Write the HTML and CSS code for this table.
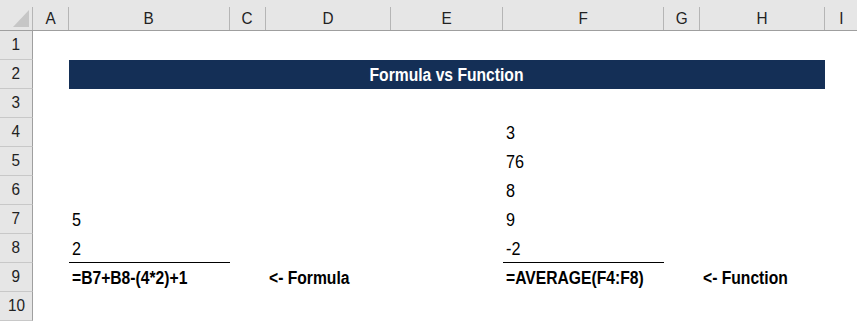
FILE: index.html
```html
<!DOCTYPE html>
<html>
<head>
<meta charset="utf-8">
<title>Formula vs Function</title>
<link rel="stylesheet" href="styles.css">
</head>
<body>
<div class="sheet">
  <div class="colhdr">
    <div class="corner"><svg width="16" height="17" viewBox="0 0 16 17"><polygon points="16,0 16,17 0,17" fill="#c6c6c6"/></svg></div>
    <div class="ch w-a"><span>A</span></div>
    <div class="ch w-b"><span>B</span></div>
    <div class="ch w-c"><span>C</span></div>
    <div class="ch w-d"><span>D</span></div>
    <div class="ch w-e"><span>E</span></div>
    <div class="ch w-f"><span>F</span></div>
    <div class="ch w-g"><span>G</span></div>
    <div class="ch w-h"><span>H</span></div>
    <div class="ch w-i"><span>I</span></div>
  </div>

  <div class="row"><div class="rh"><span>1</span></div></div>

  <div class="row">
    <div class="rh"><span>2</span></div>
    <div class="c w-a"></div>
    <div class="c title"><span class="b">Formula vs Function</span></div>
  </div>

  <div class="row"><div class="rh"><span>3</span></div></div>

  <div class="row">
    <div class="rh"><span>4</span></div>
    <div class="c w-a"></div><div class="c w-b"></div><div class="c w-c"></div><div class="c w-d"></div><div class="c w-e"></div>
    <div class="c w-f"><span class="v">3</span></div>
  </div>

  <div class="row">
    <div class="rh"><span>5</span></div>
    <div class="c w-a"></div><div class="c w-b"></div><div class="c w-c"></div><div class="c w-d"></div><div class="c w-e"></div>
    <div class="c w-f"><span class="v">76</span></div>
  </div>

  <div class="row">
    <div class="rh"><span>6</span></div>
    <div class="c w-a"></div><div class="c w-b"></div><div class="c w-c"></div><div class="c w-d"></div><div class="c w-e"></div>
    <div class="c w-f"><span class="v">8</span></div>
  </div>

  <div class="row">
    <div class="rh"><span>7</span></div>
    <div class="c w-a"></div>
    <div class="c w-b"><span class="v">5</span></div>
    <div class="c w-c"></div><div class="c w-d"></div><div class="c w-e"></div>
    <div class="c w-f"><span class="v">9</span></div>
  </div>

  <div class="row">
    <div class="rh"><span>8</span></div>
    <div class="c w-a"></div>
    <div class="c w-b under"><span class="v">2</span></div>
    <div class="c w-c"></div><div class="c w-d"></div><div class="c w-e"></div>
    <div class="c w-f under"><span class="v">-2</span></div>
  </div>

  <div class="row">
    <div class="rh"><span>9</span></div>
    <div class="c w-a"></div>
    <div class="c w-b"><span class="b">=B7+B8-(4*2)+1</span></div>
    <div class="c w-c"></div>
    <div class="c w-d"><span class="b">&lt;- Formula</span></div>
    <div class="c w-e"></div>
    <div class="c w-f"><span class="b">=AVERAGE(F4:F8)</span></div>
    <div class="c w-g"></div>
    <div class="c w-h"><span class="b">&lt;- Function</span></div>
  </div>

  <div class="row"><div class="rh"><span>10</span></div></div>
</div>
</body>
</html>
```

FILE: styles.css
```css
* {
  box-sizing: border-box;
  margin: 0;
  padding: 0;
}

body {
  margin: 0;
  background: #ffffff;
  font-family: "Liberation Sans", Arial, sans-serif;
  overflow: hidden;
  color: #000;
}

.sheet {
  width: 860px;
}

.colhdr {
  display: flex;
  align-items: flex-end;
  height: 31px;
  background: #e6e6e6;
  border-bottom: 1px solid #9f9f9f;
}

.corner {
  width: 33px;
  height: 23px;
  flex: none;
  display: flex;
  justify-content: flex-end;
  align-items: flex-end;
  padding: 0 3px 3px 0;
  border-right: 1px solid #b5b5b5;
}

.corner svg {
  display: block;
}

.ch {
  height: 23px;
  flex: none;
  display: flex;
  justify-content: center;
  align-items: center;
  border-right: 1px solid #b5b5b5;
  font-size: 17px;
  color: #222;
}

.ch span,
.rh span {
  display: inline-block;
  transform: scaleX(0.9);
}

.w-a { width: 36px; }
.w-b { width: 161px; }
.w-c { width: 36px; }
.w-d { width: 125px; }
.w-e { width: 112px; }
.w-f { width: 161px; }
.w-g { width: 36px; }
.w-h { width: 125px; }
.w-i { width: 34px; }

.row {
  display: flex;
  height: 29px;
}

.rh {
  width: 33px;
  flex: none;
  background: #e6e6e6;
  border-right: 1px solid #9f9f9f;
  border-bottom: 1px solid #c8c8c8;
  display: flex;
  justify-content: center;
  align-items: center;
  font-size: 17px;
  color: #222;
}

.c {
  flex: none;
  height: 29px;
  display: flex;
  align-items: flex-end;
  padding: 0 0 5px 3px;
  font-size: 18px;
  line-height: 18px;
  white-space: nowrap;
}

.c.under {
  border-bottom: 1px solid #000;
  padding-bottom: 4px;
}

.title {
  width: 756px;
  background: #142f56;
  color: #fff;
  justify-content: center;
  padding-left: 0;
}

.v {
  display: inline-block;
  transform: scaleX(0.9);
  transform-origin: left bottom;
}

.b {
  display: inline-block;
  font-weight: bold;
  transform: scaleX(0.87);
  transform-origin: left bottom;
}

.title .b {
  transform-origin: center bottom;
}
```
